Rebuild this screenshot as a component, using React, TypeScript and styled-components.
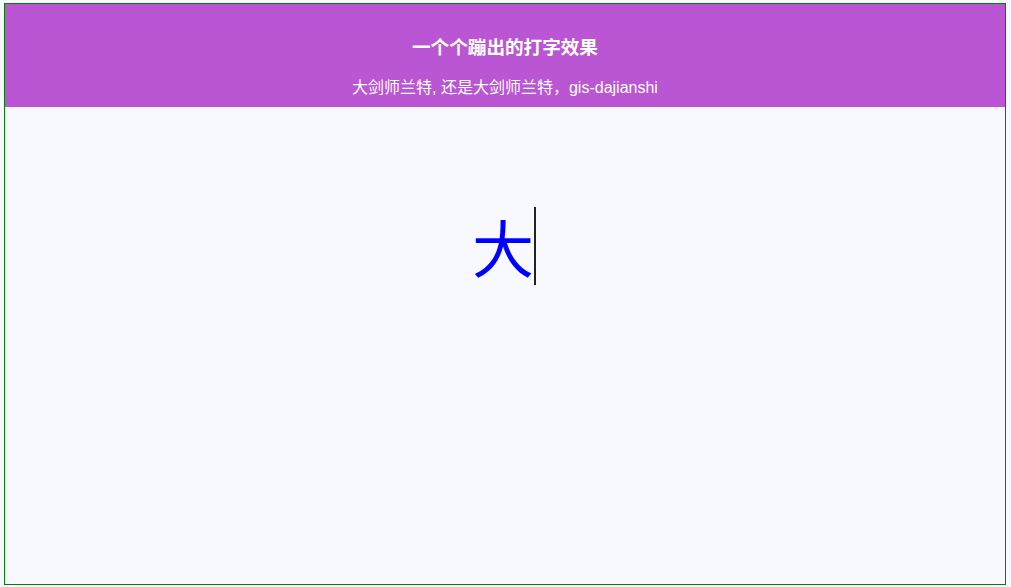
import styled, { createGlobalStyle, keyframes } from "styled-components";

const GlobalStyle = createGlobalStyle`
  html, body {
    margin: 0;
    padding: 0;
    background: #f8f8ff;
  }
  body {
    padding: 3px 0 0 4px;
    font-family: "Liberation Sans", "Noto Sans CJK SC", sans-serif;
  }
`;

const Frame = styled.div`
  width: 1000px;
  height: 580px;
  border: 1px solid green;
  background: #f8f8ff;
  display: flex;
  flex-direction: column;
`;

const Header = styled.div`
  height: 103px;
  background: #ba55d3;
  color: #fff;
  display: flex;
  flex-direction: column;
  align-items: center;
`;

const Title = styled.h3`
  margin: 30px 0 0;
  font-size: 18.6px;
  line-height: 24px;
  font-weight: bold;
  font-family: "Noto Sans CJK SC", sans-serif;
`;

const Sub = styled.div`
  margin-top: 20px;
  font-size: 16px;
  line-height: 20px;
`;

const Stage = styled.div`
  display: flex;
  justify-content: center;
  padding: 100px 2px 0 0;
`;

const blink = keyframes`
  50% { border-color: transparent; }
`;

const Typing = styled.div`
  font-family: "Noto Sans CJK SC", sans-serif;
  font-size: 62px;
  line-height: 78px;
  color: blue;
  border-right: 2px solid #222;
  animation: ${blink} 1s step-end infinite;
`;

export default function App() {
  return (
    <>
      <GlobalStyle />
      <Frame>
        <Header>
          <Title>一个个蹦出的打字效果</Title>
          <Sub>大剑师兰特, 还是大剑师兰特，gis-dajianshi</Sub>
        </Header>
        <Stage>
          <Typing>大</Typing>
        </Stage>
      </Frame>
    </>
  );
}
